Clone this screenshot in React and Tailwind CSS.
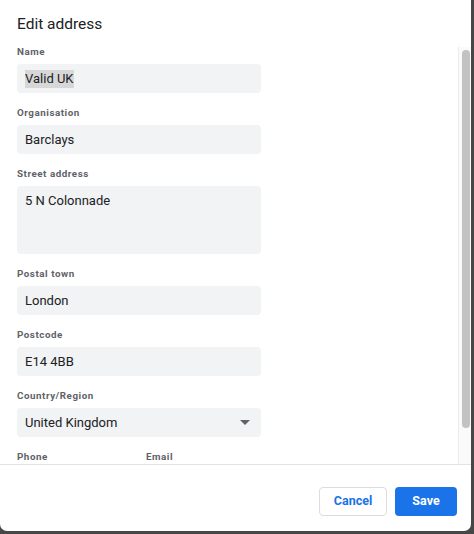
import React from "react";

const font = { fontFamily: "Roboto, 'Liberation Sans', sans-serif" };

function Label({ children, className = "" }) {
  return (
    <div className={"h-[13px] pt-[1px] text-[9.8px] leading-[12px] font-bold tracking-[0.055em] text-[#5f6368] " + className}>
      {children}
    </div>
  );
}

function Field({ label, value, tall, select, selected }) {
  return (
    <div className="flex flex-col">
      <Label>{label}</Label>
      <div
        className={
          "mt-[6px] w-[244px] rounded-[4px] bg-[#f1f3f4] pl-[8px] pr-[8px] flex text-[13px] text-[#202124] " +
          (tall ? "h-[68px] items-start pt-[6px]" : "h-[29px] items-center")
        }
      >
        <span className={selected ? "bg-[#d7d7d7] leading-[18px]" : "leading-[18px]"}>{value}</span>
        {select && (
          <svg className="ml-auto mr-[3px]" width="10" height="5" viewBox="0 0 10 5">
            <path d="M0 0 L10 0 L5 5 Z" fill="#5f6368" />
          </svg>
        )}
      </div>
    </div>
  );
}

export default function App() {
  return (
    <div className="w-[474px] h-[534px] bg-[#474747] overflow-hidden" style={font}>
      <div className="w-[471px] h-[531px] bg-white rounded-b-[7px] flex flex-col overflow-hidden">
        <div className="h-[45px] pl-[17px] pt-[14px] text-[15.5px] leading-[20px] text-[#202124]">Edit address</div>
        <div className="flex h-[419px]">
          <div className="flex-1 overflow-hidden pl-[17px] flex flex-col gap-[13px]">
            <Field label="Name" value="Valid UK" selected />
            <Field label="Organisation" value="Barclays" />
            <Field label="Street address" value="5 N Colonnade" tall />
            <Field label="Postal town" value="London" />
            <Field label="Postcode" value="E14 4BB" />
            <Field label="Country/Region" value="United Kingdom" select />
            <div className="flex">
              <div className="w-[129px] flex flex-col">
                <Label>Phone</Label>
                <div className="mt-[6px] h-[29px] w-[121px] rounded-[4px] bg-[#f1f3f4]" />
              </div>
              <div className="flex flex-col">
                <Label>Email</Label>
                <div className="mt-[6px] h-[29px] w-[115px] rounded-[4px] bg-[#f1f3f4]" />
              </div>
            </div>
          </div>
          <div className="w-[13px] border-l border-[#ececec] bg-[#fafafa] mt-[2px] flex justify-center pt-[3px] pb-[36px]">
            <div className="w-[8px] ml-[1px] h-full rounded-full bg-[#c2c2c2]" />
          </div>
        </div>
        <div className="flex-1 border-t border-[#e3e3e3] flex items-start justify-end gap-[8px] pt-[22px] pr-[14px]">
          <button className="h-[29px] w-[68px] rounded-[4px] border border-[#dadce0] bg-white text-[12.5px] font-bold text-[#1a73e8]">
            Cancel
          </button>
          <button className="h-[29px] w-[62px] rounded-[4px] bg-[#1a73e8] text-[12.5px] font-bold text-white">
            Save
          </button>
        </div>
      </div>
    </div>
  );
}
